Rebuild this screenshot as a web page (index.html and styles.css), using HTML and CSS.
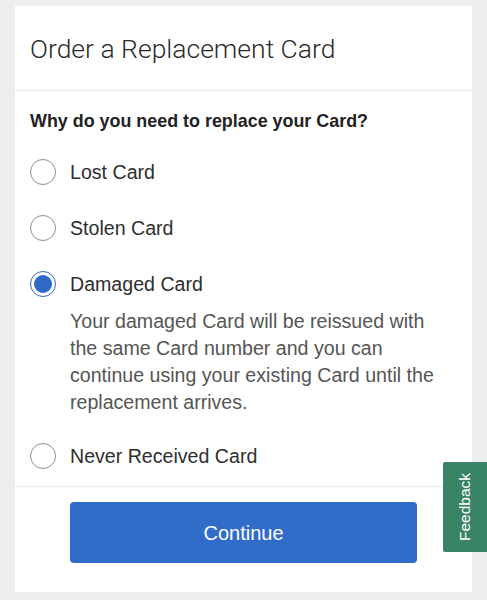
FILE: index.html
```html
<!DOCTYPE html>
<html>
<head>
<meta charset="utf-8">
<link rel="stylesheet" href="styles.css">
</head>
<body>
<div class="card">
  <div class="card-header">
    <h1 class="title">Order a Replacement Card</h1>
  </div>
  <div class="card-body">
    <div class="question">Why do you need to replace your Card?</div>
    <div class="option"><span class="radio"></span><span class="label">Lost Card</span></div>
    <div class="option"><span class="radio"></span><span class="label">Stolen Card</span></div>
    <div class="option"><span class="radio checked"></span><span class="label">Damaged Card</span></div>
    <p class="desc">Your damaged Card will be reissued with the same Card number and you can continue using your existing Card until the replacement arrives.</p>
    <div class="option"><span class="radio"></span><span class="label">Never Received Card</span></div>
  </div>
  <div class="card-footer">
    <button class="btn">Continue</button>
  </div>
</div>
<div class="feedback"><span class="feedback-text">Feedback</span></div>
</body>
</html>
```

FILE: styles.css
```css
html, body {
  margin: 0;
  padding: 0;
}
body {
  background: #ededed;
  padding: 6px 15px 9px;
  font-family: "Liberation Sans", Arial, sans-serif;
  color: #333;
}
.card {
  background: #fff;
  width: 457px;
}
.card-header {
  height: 84px;
  display: flex;
  align-items: center;
  padding: 0 15px;
  border-bottom: 1px solid #ececec;
}
.title {
  margin: 2px 0 0;
  font-family: Roboto, "Liberation Sans", sans-serif;
  font-weight: 300;
  font-size: 26.5px;
  color: #2b2b2b;
  line-height: 32px;
}
.card-body {
  padding: 18px 15px 2px;
}
.question {
  font-weight: bold;
  font-size: 17.9px;
  line-height: 24px;
  color: #222;
  margin-bottom: 11px;
}
.option {
  display: flex;
  align-items: center;
  padding: 15px 0;
}
.radio {
  width: 26px;
  height: 26px;
  box-sizing: border-box;
  border: 1px solid #8f8f8f;
  border-radius: 50%;
  flex: none;
  position: relative;
  margin-right: 14px;
}
.radio.checked {
  border: 1.5px solid #306ac8;
}
.radio.checked::after {
  content: "";
  position: absolute;
  left: 2.5px;
  top: 2.5px;
  width: 18px;
  height: 18px;
  border-radius: 50%;
  background: #306ac8;
}
.label {
  font-size: 19.6px;
  line-height: 26px;
  color: #2e2e2e;
}
.desc {
  margin: -4px 10px 12px 40px;
  font-size: 19.6px;
  line-height: 27px;
  color: #555;
}
.card-footer {
  border-top: 1px solid #ececec;
  padding: 15px 55px 29px;
}
.btn {
  display: block;
  width: 100%;
  height: 61px;
  border: none;
  border-radius: 4px;
  background: #306cc8;
  color: #fff;
  font-family: "Liberation Sans", Arial, sans-serif;
  font-size: 20px;
  padding-top: 2px;
}
.feedback {
  position: fixed;
  right: 0;
  top: 462px;
  width: 44px;
  height: 90px;
  background: #3a8466;
  border-radius: 2px 0 0 2px;
  display: flex;
  align-items: center;
  justify-content: center;
}
.feedback-text {
  color: #fff;
  font-size: 15.5px;
  transform: rotate(-90deg);
  white-space: nowrap;
}
```
